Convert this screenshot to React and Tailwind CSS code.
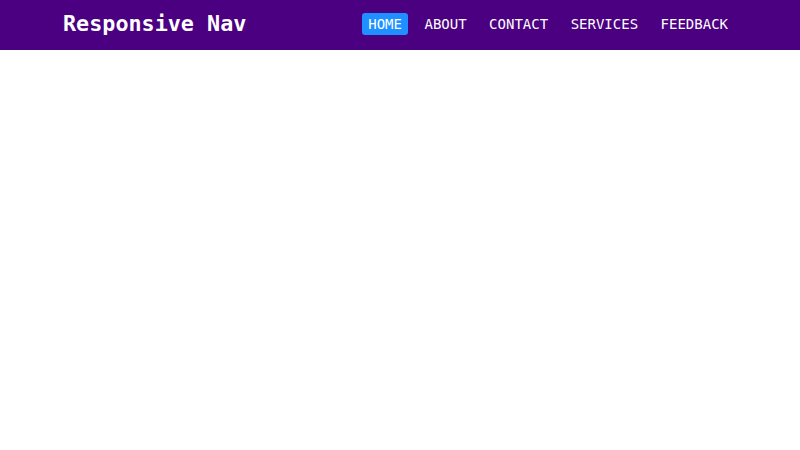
import React from 'react';

const LINKS = ['HOME', 'ABOUT', 'CONTACT', 'SERVICES', 'FEEDBACK'];

export default function App() {
  return (
    <div className="min-h-screen bg-white" style={{ fontFamily: "'DejaVu Sans Mono', monospace" }}>
      <nav className="h-[50px] bg-[#4b0082] flex items-center justify-between pl-[63px] pr-[66px]">
        <h1 className="text-[21.75px] font-bold text-white -mt-[1px]">Responsive Nav</h1>
        <ul className="flex items-center gap-[10.5px]">
          {LINKS.map((l, i) => (
            <li key={l}>
              <a href="#"
                className={
                  'block px-[6px] py-[2px] rounded-[3px] text-[14px] leading-[18px] text-white -mt-[2px] ' +
                  (i === 0 ? 'bg-[#1e90ff]' : '')
                }>
                {l}
              </a>
            </li>
          ))}
        </ul>
      </nav>
    </div>
  );
}
